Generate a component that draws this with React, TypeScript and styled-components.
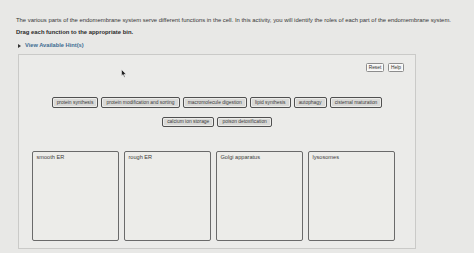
import React from 'react';
import styled, { createGlobalStyle } from 'styled-components';

const GlobalStyle = createGlobalStyle`
  html, body {
    margin: 0;
    padding: 0;
    background: #e8e8e6;
    font-family: "Liberation Sans", Arial, sans-serif;
    color: #2b2b2b;
  }
`;

const Page = styled.div`
  position: relative;
  width: 474px;
  height: 253px;
  overflow: hidden;
  padding: 17px 0 0 16px;
  box-sizing: border-box;
`;

const Intro = styled.p`
  margin: 0;
  font-size: 5.9px;
  line-height: 7px;
  color: #363636;
  white-space: nowrap;
`;

const Instruction = styled.p`
  margin: 5px 0 0;
  font-size: 5.9px;
  line-height: 7px;
  font-weight: 700;
  color: #2a2a2a;
`;

const HintToggle = styled.div`
  display: flex;
  align-items: center;
  gap: 4px;
  margin: 6px 0 0 2px;
  font-size: 5.7px;
  line-height: 7px;
  font-weight: 700;
  color: #3e6c92;
`;

const Caret = styled.span`
  width: 0;
  height: 0;
  border-top: 2.5px solid transparent;
  border-bottom: 2.5px solid transparent;
  border-left: 3px solid #333;
`;

const Panel = styled.div`
  margin: 5px 0 0 2px;
  width: 398px;
  height: 195px;
  box-sizing: border-box;
  border: 1px solid #cacac8;
  background: #ebebe9;
  padding: 8px 11px 0;
  display: flex;
  flex-direction: column;
`;

const Toolbar = styled.div`
  display: flex;
  justify-content: flex-end;
  gap: 4px;
`;

const ToolButton = styled.button<{ $w: number }>`
  width: ${({ $w }) => $w}px;
  height: 9px;
  padding: 0;
  border: 1px solid #8d8d8d;
  border-radius: 1.5px;
  background: #f4f4f2;
  font-family: inherit;
  font-size: 4.8px;
  color: #333;
  box-shadow: inset 0 0 0 0.5px #fff;
`;

const ChipArea = styled.div`
  display: flex;
  flex-direction: column;
  align-items: center;
  gap: 9px;
  margin-top: 25px;
`;

const ChipRow = styled.div`
  display: flex;
  gap: 3px;
`;

const Chip = styled.div`
  height: 10.5px;
  box-sizing: border-box;
  padding: 0 4.1px;
  display: flex;
  align-items: center;
  border: 1px solid #505050;
  border-radius: 2px;
  background: #d9d9d7;
  box-shadow: inset 0 0 0 0.8px #f2f2f0;
  font-size: 4.9px;
  color: #3a3a3a;
  white-space: nowrap;
`;

const Bins = styled.div`
  display: flex;
  justify-content: center;
  gap: 5px;
  margin-top: 24px;
  padding-right: 8px;
`;

const Bin = styled.div`
  width: 87px;
  height: 90px;
  box-sizing: border-box;
  border: 1px solid #6a6a6a;
  border-radius: 2px;
  background: #ecece9;
  padding: 2px 4px;
  font-size: 5.6px;
  color: #3c3c3c;
`;

const Cursor = styled.svg`
  position: absolute;
  left: 121px;
  top: 69px;
`;

const row1 = [
  'protein synthesis',
  'protein modification and sorting',
  'macromolecule digestion',
  'lipid synthesis',
  'autophagy',
  'cisternal maturation',
];
const row2 = ['calcium ion storage', 'poison detoxification'];
const bins = ['smooth ER', 'rough ER', 'Golgi apparatus', 'lysosomes'];

const App: React.FC = () => (
  <>
    <GlobalStyle />
    <Page>
      <Intro>
        The various parts of the endomembrane system serve different functions in the cell. In this activity, you will identify the roles of each part of the endomembrane system.
      </Intro>
      <Instruction>Drag each function to the appropriate bin.</Instruction>
      <HintToggle>
        <Caret />
        View Available Hint(s)
      </HintToggle>
      <Panel>
        <Toolbar>
          <ToolButton $w={18}>Reset</ToolButton>
          <ToolButton $w={16}>Help</ToolButton>
        </Toolbar>
        <ChipArea>
          <ChipRow>
            {row1.map((t) => (
              <Chip key={t}>{t}</Chip>
            ))}
          </ChipRow>
          <ChipRow>
            {row2.map((t) => (
              <Chip key={t}>{t}</Chip>
            ))}
          </ChipRow>
        </ChipArea>
        <Bins>
          {bins.map((b) => (
            <Bin key={b}>{b}</Bin>
          ))}
        </Bins>
      </Panel>
      <Cursor width="6" height="9" viewBox="0 0 6 9">
        <path d="M0.5 0.5 L0.5 7 L2 5.6 L3.2 8.3 L4.1 7.9 L3 5.3 L5.2 5.2 Z" fill="#222" stroke="#fff" strokeWidth="0.5" />
      </Cursor>
    </Page>
  </>
);

export default App;
